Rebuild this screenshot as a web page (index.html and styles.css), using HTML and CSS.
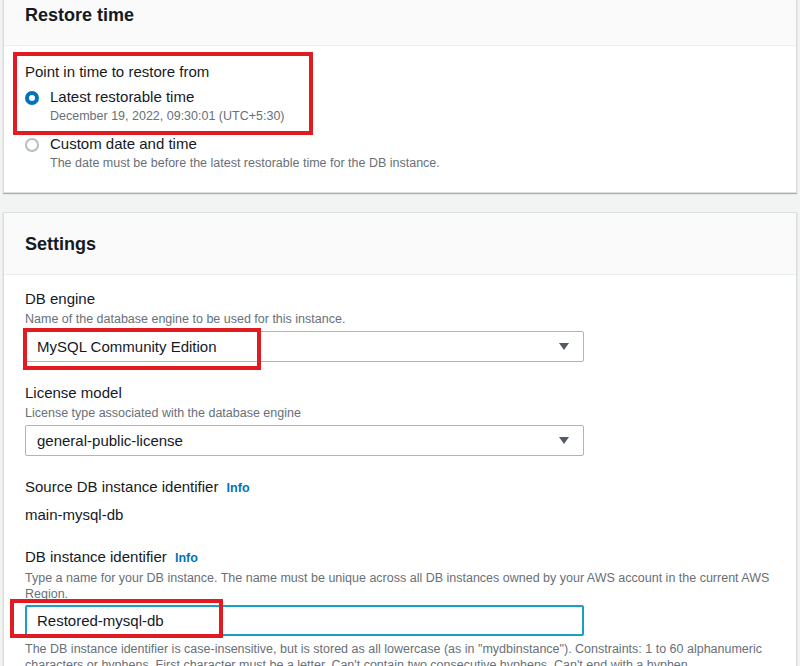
FILE: index.html
```html
<!DOCTYPE html>
<html lang="en">
<head>
<meta charset="utf-8">
<title>Restore DB instance</title>
<link rel="stylesheet" href="styles.css">
</head>
<body>
<div class="page">
  <section class="panel panel-first">
    <header class="panel-head"><h2>Restore time</h2></header>
    <div class="panel-body body-restore">
      <div class="group">
        <div class="label">Point in time to restore from</div>
        <div class="radio-row row-1">
          <span class="radio checked"></span>
          <div class="radio-text">
            <div class="label">Latest restorable time</div>
            <div class="desc">December 19, 2022, 09:30:01 (UTC+5:30)</div>
          </div>
        </div>
        <span class="mark mark-1"></span>
      </div>
      <div class="radio-row row-2">
        <span class="radio"></span>
        <div class="radio-text">
          <div class="label">Custom date and time</div>
          <div class="desc">The date must be before the latest restorable time for the DB instance.</div>
        </div>
      </div>
    </div>
  </section>

  <section class="panel panel-second">
    <header class="panel-head"><h2>Settings</h2></header>
    <div class="panel-body body-settings">
      <div class="field">
        <div class="label">DB engine</div>
        <div class="desc">Name of the database engine to be used for this instance.</div>
        <div class="select">
          <span class="select-value">MySQL Community Edition</span>
          <svg class="caret" width="10" height="7" viewBox="0 0 10 7"><path d="M0 0H10L5 7Z" fill="#545b64"/></svg>
          <span class="mark mark-2"></span>
        </div>
      </div>
      <div class="field">
        <div class="label">License model</div>
        <div class="desc">License type associated with the database engine</div>
        <div class="select">
          <span class="select-value">general-public-license</span>
          <svg class="caret" width="10" height="7" viewBox="0 0 10 7"><path d="M0 0H10L5 7Z" fill="#545b64"/></svg>
        </div>
      </div>
      <div class="field">
        <div class="label">Source DB instance identifier <a class="info" href="#">Info</a></div>
        <div class="value">main-mysql-db</div>
      </div>
      <div class="field">
        <div class="label">DB instance identifier <a class="info" href="#">Info</a></div>
        <div class="desc">Type a name for your DB instance. The name must be unique across all DB instances owned by your AWS account in the current AWS Region.</div>
        <div class="input">
          <span class="input-value">Restored-mysql-db</span>
          <span class="mark mark-3"></span>
        </div>
        <div class="desc after">The DB instance identifier is case-insensitive, but is stored as all lowercase (as in "mydbinstance"). Constraints: 1 to 60 alphanumeric characters or hyphens. First character must be a letter. Can't contain two consecutive hyphens. Can't end with a hyphen.</div>
      </div>
    </div>
  </section>
</div>
</body>
</html>
```
FILE: styles.css
```css
html, body {
  margin: 0;
  padding: 0;
  background: #f2f3f3;
  overflow: hidden;
}
body {
  font-family: "Liberation Sans", Arial, sans-serif;
  color: #16191f;
}
.page {
  padding: 0 3px;
  margin-top: -17px;
}
.panel {
  background: #ffffff;
  border: 1px solid #dcdfe0;
  box-shadow: 0 1px 1px 0 rgba(0, 28, 36, 0.3);
}
.panel-second {
  margin-top: 19px;
}
.panel-head {
  background: #fafafa;
  border-bottom: 1px solid #eaeded;
  height: 61px;
  display: flex;
  align-items: center;
  padding: 0 21px;
}
.panel-head h2 {
  margin: 0;
  font-size: 18px;
  font-weight: 700;
  line-height: 22px;
}
.panel-body {
  padding: 0 21px;
}
.body-restore {
  padding-top: 15px;
  padding-bottom: 21px;
}
.group {
  position: relative;
}
.label {
  font-size: 15px;
  line-height: 22px;
}
.desc {
  font-size: 12.5px;
  line-height: 16px;
  color: #687078;
}
.radio-row {
  display: flex;
  align-items: flex-start;
}
.row-1 {
  margin-top: 3px;
}
.row-2 {
  margin-top: 9px;
}
.radio {
  box-sizing: border-box;
  width: 14px;
  height: 14px;
  border-radius: 50%;
  border: 2px solid #b4bfc0;
  margin-top: 5px;
  margin-right: 11px;
  flex: none;
  background: #fff;
}
.radio.checked {
  border: 4px solid #0073bb;
}
.body-settings {
  padding-top: 13px;
  padding-bottom: 20px;
}
.field {
  margin-bottom: 20px;
}
.field .desc {
  margin-top: 1px;
}
.select, .input {
  position: relative;
  box-sizing: border-box;
  width: 559px;
  height: 31px;
  margin-top: 4px;
  border: 1px solid #aab7b8;
  border-radius: 2px;
  display: flex;
  align-items: center;
  padding: 0 14px 0 11px;
  font-size: 15px;
}
.select-value, .input-value {
  flex: 1;
}
.caret {
  flex: none;
}
.value {
  font-size: 15px;
  line-height: 22px;
  margin-top: 5px;
}
.info {
  font-size: 12.5px;
  font-weight: 700;
  color: #0073bb;
  text-decoration: none;
  margin-left: 4px;
}
.input {
  height: 31px;
  margin-top: 3px;
  border: 2px solid #1a9fc3;
  padding-left: 10px;
}
.field .desc.after {
  margin-top: 5px;
}
.mark {
  position: absolute;
  border: 4px solid #e11b22;
  box-sizing: border-box;
  pointer-events: none;
}
.mark-1 {
  top: -9px;
  left: -12px;
  width: 300px;
  height: 83px;
}
.mark-2 {
  top: -4px;
  left: -3px;
  width: 238px;
  height: 42px;
}
.mark-3 {
  top: -8px;
  left: -17px;
  width: 213px;
  height: 39px;
}
```
